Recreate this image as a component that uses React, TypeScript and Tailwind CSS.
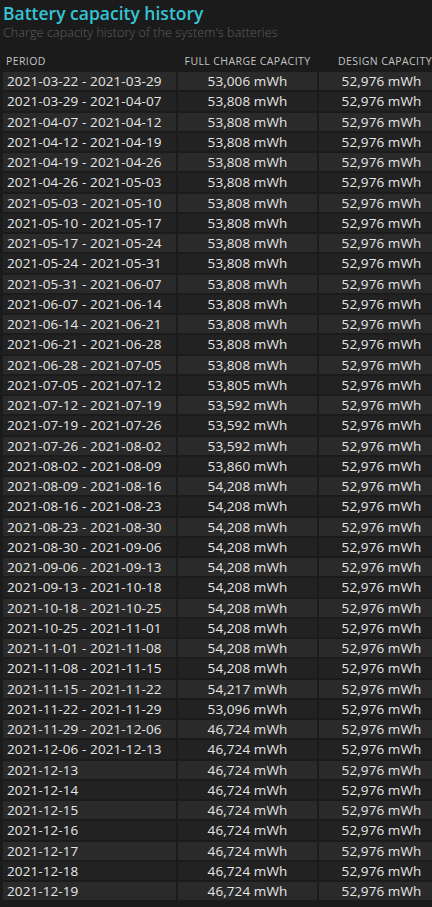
const rows: [string, string][] = [
  ['2021-03-22 - 2021-03-29', '53,006'],
  ['2021-03-29 - 2021-04-07', '53,808'],
  ['2021-04-07 - 2021-04-12', '53,808'],
  ['2021-04-12 - 2021-04-19', '53,808'],
  ['2021-04-19 - 2021-04-26', '53,808'],
  ['2021-04-26 - 2021-05-03', '53,808'],
  ['2021-05-03 - 2021-05-10', '53,808'],
  ['2021-05-10 - 2021-05-17', '53,808'],
  ['2021-05-17 - 2021-05-24', '53,808'],
  ['2021-05-24 - 2021-05-31', '53,808'],
  ['2021-05-31 - 2021-06-07', '53,808'],
  ['2021-06-07 - 2021-06-14', '53,808'],
  ['2021-06-14 - 2021-06-21', '53,808'],
  ['2021-06-21 - 2021-06-28', '53,808'],
  ['2021-06-28 - 2021-07-05', '53,808'],
  ['2021-07-05 - 2021-07-12', '53,805'],
  ['2021-07-12 - 2021-07-19', '53,592'],
  ['2021-07-19 - 2021-07-26', '53,592'],
  ['2021-07-26 - 2021-08-02', '53,592'],
  ['2021-08-02 - 2021-08-09', '53,860'],
  ['2021-08-09 - 2021-08-16', '54,208'],
  ['2021-08-16 - 2021-08-23', '54,208'],
  ['2021-08-23 - 2021-08-30', '54,208'],
  ['2021-08-30 - 2021-09-06', '54,208'],
  ['2021-09-06 - 2021-09-13', '54,208'],
  ['2021-09-13 - 2021-10-18', '54,208'],
  ['2021-10-18 - 2021-10-25', '54,208'],
  ['2021-10-25 - 2021-11-01', '54,208'],
  ['2021-11-01 - 2021-11-08', '54,208'],
  ['2021-11-08 - 2021-11-15', '54,208'],
  ['2021-11-15 - 2021-11-22', '54,217'],
  ['2021-11-22 - 2021-11-29', '53,096'],
  ['2021-11-29 - 2021-12-06', '46,724'],
  ['2021-12-06 - 2021-12-13', '46,724'],
  ['2021-12-13', '46,724'],
  ['2021-12-14', '46,724'],
  ['2021-12-15', '46,724'],
  ['2021-12-16', '46,724'],
  ['2021-12-17', '46,724'],
  ['2021-12-18', '46,724'],
  ['2021-12-19', '46,724'],
];

export default function App() {
  return (
    <div
      className="w-[432px] min-h-screen overflow-hidden bg-[#1b1b1b] text-[#e6e6e6]"
      style={{ fontFamily: '"Open Sans", "Noto Sans", sans-serif' }}
    >
      <h1 className="pl-[3px] pt-px text-[17.5px] leading-[24px] font-semibold text-[#36c4d4]">
        Battery capacity history
      </h1>
      <p className="pl-[3px] text-[12.5px] leading-[16px] font-light tracking-[0.1px] text-[#5e5e5e]">
        Charge capacity history of the system's batteries
      </p>

      <table className="mt-[10px] ml-px w-[450px] table-fixed border-separate border-spacing-[2px] text-[13.5px]">
        <colgroup>
          <col className="w-[173px]" />
          <col className="w-[139px]" />
          <col className="w-[132px]" />
        </colgroup>
        <thead>
          <tr className="h-[17px] text-[10.5px] uppercase tracking-[0.4px] text-[#c4c4c4]">
            <th className="p-0 pl-[3px] text-left font-normal">Period</th>
            <th className="p-0 text-center font-normal">Full charge capacity</th>
            <th className="p-0 text-center font-normal">Design capacity</th>
          </tr>
        </thead>
        <tbody>
          {rows.map(([period, full], i) => (
            <tr
              key={period}
              className={`h-[18.25px] ${i % 2 === 0 ? 'bg-[#2a2a2a]' : 'bg-[#222222]'}`}
            >
              <td className="p-0 pl-[4px] leading-[18px] tracking-[0.1px] whitespace-nowrap">{period}</td>
              <td className="p-0 text-center leading-[18px] tracking-[0.1px] whitespace-nowrap">{full} mWh</td>
              <td className="p-0 pr-[7px] text-center leading-[18px] tracking-[0.1px] whitespace-nowrap">52,976 mWh</td>
            </tr>
          ))}
        </tbody>
      </table>
    </div>
  );
}
